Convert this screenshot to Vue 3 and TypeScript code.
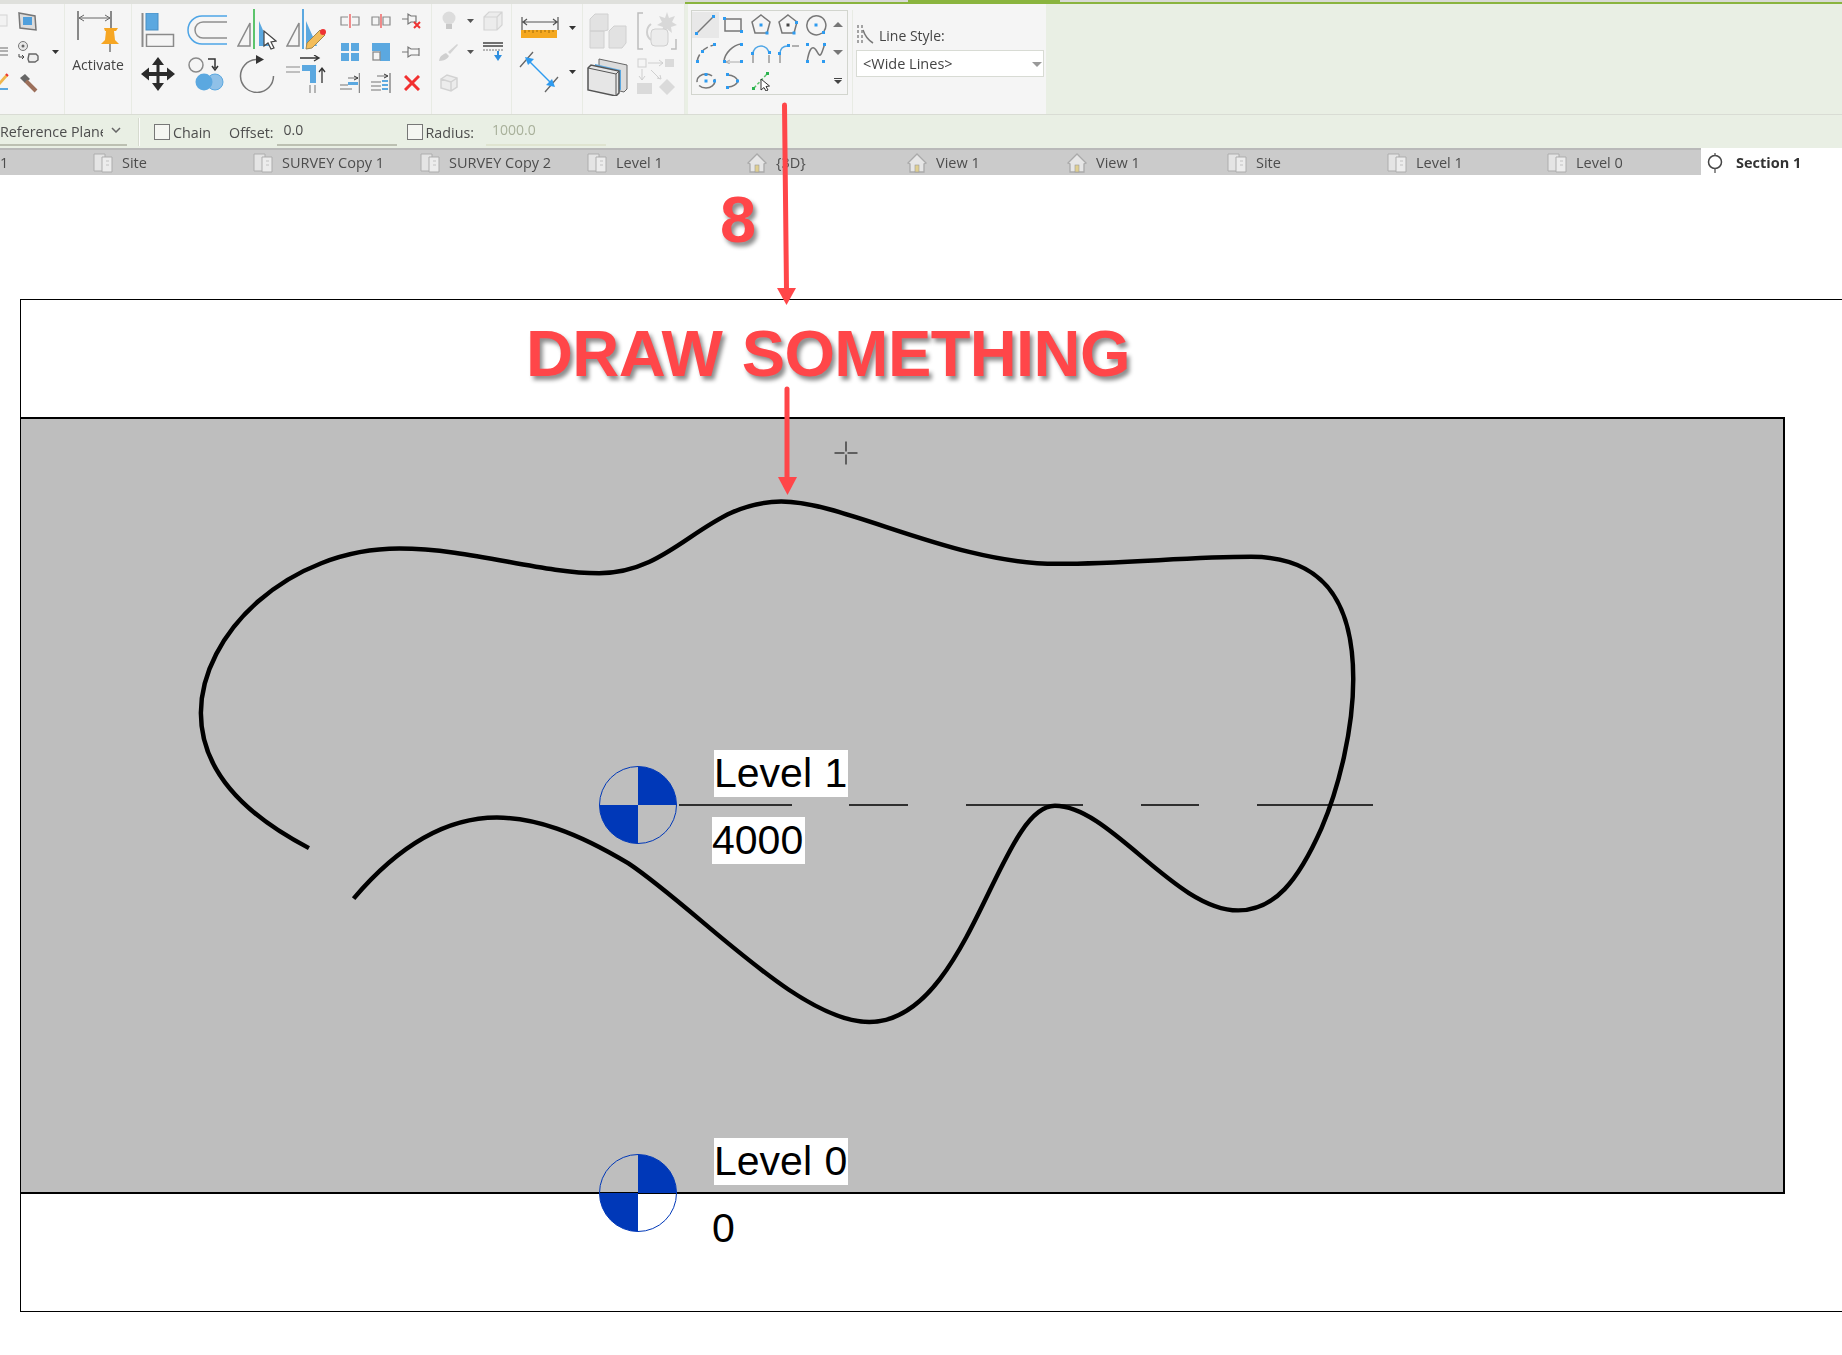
<template>
  <div class="page">
    <div class="top-strip">
      <div class="strip-grey"></div>
      <div class="strip-tab"></div>
      <div class="strip-green"></div>
      <div class="strip-tab strip-rest"></div>
    </div>

    <div class="ribbon">
      <!-- clipped panel on the left edge -->
      <div class="panel panel-a">
        <svg class="ico" width="10" height="18" viewBox="0 0 10 18"><rect x="-4" y="3" width="11" height="11" fill="#f2f2f2" stroke="#d4d4d4" /></svg>
        <svg class="ico" width="20" height="20" viewBox="0 0 20 20"><path d="M1 2 17 5 18 19 2 17Z" fill="#dcdcdc" stroke="#777" stroke-width="1.5" /><rect x="5" y="6" width="9" height="8" fill="#4f9fdc" /></svg>
        <span></span>
        <svg class="ico" width="10" height="14" viewBox="0 0 10 14"><path d="M-2 3H8M-2 6H8M-2 10H8" stroke="#999" stroke-width="1.5" /></svg>
        <svg class="ico" width="22" height="22" viewBox="0 0 22 22"><circle cx="6" cy="5" r="4.5" fill="#e8e8e8" stroke="#777" /><circle cx="6" cy="5" r="1.5" fill="#666" /><path d="M2 13v3h5M5 14l2 2-2 2" fill="none" stroke="#444" /><path d="M12 13h7l2 2v4l-3 2h-6l-1-3Z" fill="#eee" stroke="#666" stroke-width="1.4" /></svg>
        <svg class="ico caret-sm" width="7" height="4" viewBox="0 0 7 4"><path d="M0 0h7L3.500 4Z" fill="#333" /></svg>
        <svg class="ico" width="10" height="20" viewBox="0 0 10 20"><path d="M-2 10 6 1l2 2-8 9Z" fill="#f0b64c" /><path d="M6 1l2 2" stroke="#ee3333" stroke-width="2" /><path d="M-2 16H8" stroke="#5ba8e0" stroke-width="2" /></svg>
        <svg class="ico" width="20" height="20" viewBox="0 0 20 20"><path d="M2 5 7 1l5 5-5 4Z" fill="#666" /><path d="M8 8l10 10" stroke="#9c6f5a" stroke-width="4" /></svg>
        <span></span>
      </div>

      <div class="panel panel-b">
        <svg class="ico" width="42" height="42" viewBox="0 0 42 42">
          <path d="M1 1v29M34 1v29" stroke="#666" stroke-width="1.5" />
          <path d="M2 8h31M7 5 2 8l5 3M28 5l5 3-5 3" fill="none" stroke="#666" />
          <path d="M27 18h14l-2 3h-2l1 9 4 4H24l4-4 1-9h-1Z" fill="#f6a623" />
          <path d="M33 34v8" stroke="#777" stroke-width="1.5" />
        </svg>
        <span class="ribbon-label">Activate</span>
      </div>

      <div class="panel panel-c">
        <div class="tools-large">
          <svg class="ico" width="34" height="34" viewBox="0 0 34 34"><path d="M1.500 0v34" stroke="#8a8a8a" stroke-width="2" /><rect x="5" y="0" width="12" height="17" fill="#5ba8e0" stroke="#4a8fc4" /><rect x="5.500" y="21.500" width="27" height="12" fill="none" stroke="#8a8a8a" stroke-width="1.500" /></svg>
          <svg class="ico" width="40" height="30" viewBox="0 0 40 30"><path d="M40 1H15a14 14 0 0 0 0 28h25" fill="none" stroke="#4ea5e6" stroke-width="1.500" /><path d="M40 7H16a8 8 0 0 0 0 16h24" fill="none" stroke="#8f8f8f" stroke-width="1.500" /></svg>
          <svg class="ico" width="40" height="42" viewBox="0 0 40 42"><path d="M13 14v23H1Z" fill="none" stroke="#8a8a8a" stroke-width="1.500" /><path d="M17 0v40" stroke="#5cc46c" stroke-width="2" /><path d="M22 12v25h11Z" fill="#5ba8e0" /><path d="M27 22v15l4-3 3 6 3-1-3-6 5-1Z" fill="#fff" stroke="#444" stroke-width="1.200" /></svg>
          <svg class="ico" width="40" height="42" viewBox="0 0 40 42"><path d="M13 14v23H1Z" fill="none" stroke="#8a8a8a" stroke-width="1.500" /><path d="M17 0v40" stroke="#5ba8e0" stroke-width="2" /><path d="M20 12v25h11Z" fill="#5ba8e0" /><path d="M21 34 34 21l5 5-13 13-6 1Z" fill="#f3bd5a" stroke="#a08850" /><circle cx="37" cy="23" r="3" fill="#ee3333" /></svg>
          <svg class="ico" width="34" height="34" viewBox="0 0 34 34"><path d="M17 0l6 8h-4.500v7H26v-4.500l8 6.500-8 6.500V19h-7.500v7H23l-6 8-6-8h4.500v-7H8v4.500L0 17l8-6.500V15h7.500V8H11Z" fill="#2b2b2b" /></svg>
          <svg class="ico" width="38" height="36" viewBox="0 0 38 36"><circle cx="8" cy="9" r="7" fill="none" stroke="#8a8a8a" stroke-width="1.500" /><path d="M20 3h7v9M24 10l3 4 3-4" fill="none" stroke="#333" stroke-width="1.500" /><circle cx="27" cy="26" r="8" fill="#8fc1e8" stroke="#5ba8e0" /><circle cx="16" cy="26" r="8.500" fill="#5ba8e0" /></svg>
          <svg class="ico" width="38" height="38" viewBox="0 0 38 38"><path d="M18 4.500A16.500 16.500 0 1 0 35.500 21" fill="none" stroke="#777" stroke-width="1.500" /><path d="M18 0l8 4.500-8 4.500Z" fill="#333" /></svg>
          <svg class="ico" width="40" height="38" viewBox="0 0 40 38"><path d="M0 12h14M0 17h14M24 30v8M29 30v8" stroke="#8a8a8a" stroke-width="1.200" /><path d="M14 3h18M28 0l5 3-5 3" fill="none" stroke="#333" stroke-width="1.300" /><path d="M16 10h14v18h-6V16h-8Z" fill="#5ba8e0" /><path d="M36 14v14M33 17l3-4 3 4" fill="none" stroke="#333" stroke-width="1.300" /></svg>
        </div>
        <div class="tools-small">
          <svg class="ico" width="20" height="14" viewBox="0 0 20 14"><path d="M8 3H1v8h7M12 3h7v8h-7" fill="none" stroke="#8a8a8a" stroke-width="1.200" /><path d="M10 0v14" stroke="#ee4444" stroke-width="1.200" /></svg>
          <svg class="ico" width="20" height="14" viewBox="0 0 20 14"><path d="M1 3h7v8H1ZM12 3h7v8h-7Z" fill="none" stroke="#8a8a8a" stroke-width="1.200" /><path d="M10 0v14" stroke="#ee4444" stroke-width="1.200" /></svg>
          <svg class="ico" width="20" height="18" viewBox="0 0 20 18"><path d="M0 7h6M6 2v10l3-2h5V4H9Z" fill="none" stroke="#777" stroke-width="1.200" /><path d="M12 10l6 6M18 10l-6 6" stroke="#ee3333" stroke-width="2" /></svg>
          <svg class="ico" width="18" height="18" viewBox="0 0 18 18"><rect width="8" height="8" fill="#5ba8e0" /><rect x="10" width="8" height="8" fill="#5ba8e0" /><rect y="10" width="8" height="8" fill="#5ba8e0" /><rect x="10" y="10" width="8" height="8" fill="#5ba8e0" /></svg>
          <svg class="ico" width="18" height="18" viewBox="0 0 18 18"><path d="M0 0h18v18H8V8H0Z" fill="#5ba8e0" /><rect x="1" y="9" width="7" height="8" fill="none" stroke="#8a8a8a" stroke-width="1.300" /></svg>
          <svg class="ico" width="20" height="14" viewBox="0 0 20 14"><path d="M0 7h6M6 2v10l3-2h8V4H9ZM17 3v8" fill="none" stroke="#777" stroke-width="1.200" /></svg>
          <svg class="ico" width="20" height="20" viewBox="0 0 20 20"><path d="M0 12h8M0 16h12M8 5h10" stroke="#777" stroke-width="1.200" /><path d="M14 3l4 2-4 2" fill="none" stroke="#333" /><path d="M8 9h10v3H8Z" fill="#5ba8e0" /><path d="M19.500 0v20" stroke="#8a8a8a" stroke-width="1.500" /></svg>
          <svg class="ico" width="20" height="20" viewBox="0 0 20 20"><path d="M0 9h10M0 13h10M0 17h10M6 3h10" stroke="#777" stroke-width="1.200" /><path d="M13 1l4 2-4 2" fill="none" stroke="#333" /><path d="M11 7h6v2h-6ZM11 11h6v2h-6ZM11 15h6v2h-6Z" fill="#5ba8e0" /><path d="M19 0v20" stroke="#8a8a8a" stroke-width="1.500" /></svg>
          <svg class="ico" width="16" height="16" viewBox="0 0 16 16"><path d="M1 1l14 14M15 1 1 15" stroke="#f23030" stroke-width="3" /></svg>
        </div>
      </div>

      <div class="panel panel-d">
        <svg class="ico" width="16" height="19" viewBox="0 0 16 19"><circle cx="8" cy="7" r="6.500" fill="#dcdcdc" /><rect x="5" y="13" width="6" height="5" fill="#c8c8c8" /></svg>
        <svg class="ico" width="7" height="4" viewBox="0 0 7 4"><path d="M0 0h7L3.500 4Z" fill="#555" /></svg>
        <svg class="ico" width="20" height="20" viewBox="0 0 20 20"><path d="M1 6l5-5h13v13l-5 5H1ZM1 6h13v13M14 6l5-5" fill="#ececec" stroke="#d4d4d4" stroke-width="1.200" /></svg>
        <svg class="ico" width="20" height="18" viewBox="0 0 20 18"><path d="M0 18c1-6 5-7 7-8l3 3c-1 2-4 5-10 5Z" fill="#cfcfcf" /><path d="M9 9 18 1l1 1-8 9Z" fill="#d4d4d4" /></svg>
        <svg class="ico" width="7" height="4" viewBox="0 0 7 4"><path d="M0 0h7L3.500 4Z" fill="#555" /></svg>
        <svg class="ico" width="20" height="20" viewBox="0 0 20 20"><path d="M0 1h20M0 4h20" stroke="#444" stroke-width="1.300" /><path d="M0 8h20" stroke="#777" stroke-dasharray="2 1" /><path d="M15 9v5" stroke="#2e8fe0" stroke-width="2" /><path d="M11 13h8l-4 6Z" fill="#2e8fe0" /></svg>
        <svg class="ico" width="20" height="18" viewBox="0 0 20 18"><path d="M2 5l6-4 10 3v9l-6 4-10-3ZM2 5l10 3v9M12 8l6-4" fill="#ececec" stroke="#d2d2d2" stroke-width="1.500" /></svg>
        <span></span>
        <span></span>
      </div>

      <div class="panel panel-e">
        <svg class="ico" width="38" height="22" viewBox="0 0 38 22"><path d="M1 0v13M37 0v13M2 5h34M6 2 2 5l4 3M32 2l4 3-4 3" fill="none" stroke="#555" stroke-width="1.200" /><rect y="13" width="36" height="8" fill="#f5a81f" /><path d="M4 13v3M8 13v2M12 13v3M16 13v2M20 13v3M24 13v2M28 13v3M32 13v2" stroke="#a06a08" /></svg>
        <svg class="ico" width="7" height="4" viewBox="0 0 7 4"><path d="M0 0h7L3.500 4Z" fill="#333" /></svg>
        <svg class="ico" width="42" height="42" viewBox="0 0 42 42"><path d="M1 16 14 1M26 41 39 26" stroke="#666" stroke-width="1.300" /><path d="M9 9l24 24" stroke="#2e9bf0" stroke-width="1.500" /><path d="M6 6l9 2-6 6ZM36 36l-9-2 6-6Z" fill="#2e9bf0" /></svg>
        <svg class="ico" width="7" height="4" viewBox="0 0 7 4"><path d="M0 0h7L3.500 4Z" fill="#333" /></svg>
      </div>

      <div class="panel panel-f">
        <svg class="ico" width="38" height="36" viewBox="0 0 38 36"><path d="M1 6l5-5h13v16l-4 1H1ZM20 18l5-5h12v17l-4 5H20ZM1 18h14v17H1Z" fill="#e2e2e2" stroke="#d0d0d0" /></svg>
        <svg class="ico" width="40" height="38" viewBox="0 0 40 38"><path d="M6 1H1v36h5M34 37h5V27" fill="none" stroke="#bdbdbd" stroke-width="1.500" /><path d="M30 0l2 6 6-2-3 6 5 3-6 2 1 6-5-4-5 4 1-6-6-2 5-3-3-6 6 2Z" fill="#d8d8d8" /><path d="M14 12a10 10 0 0 0 0 16" fill="none" stroke="#cfcfcf" stroke-width="2" /><rect x="14" y="17" width="17" height="17" rx="4" fill="#ececec" stroke="#cfcfcf" /></svg>
        <svg class="ico" width="42" height="38" viewBox="0 0 42 38"><path d="M12 1l28 6v24l-3 3-25-6Z" fill="#dcdcdc" stroke="#666" /><path d="M8 6l26 6v20L8 27Z" fill="#5ba8e0" /><path d="M1 10l3-3 28 6v22l-3 3-28-6Z" fill="#e6e6e6" stroke="#555" stroke-width="1.500" /><path d="M29 38V16L1 10M29 16l3-3" fill="none" stroke="#555" /></svg>
        <svg class="ico" width="40" height="38" viewBox="0 0 40 38"><rect x="1" y="1" width="8" height="8" fill="#f5f5f5" stroke="#cfcfcf" /><path d="M11 5h15M22 2l4 3-4 3" fill="none" stroke="#cfcfcf" /><rect x="28" y="1" width="9" height="8" fill="#dadada" /><path d="M5 11v11M2 18l3 4 3-4M14 12l9 9M20 20l4 1-1-4" fill="none" stroke="#cfcfcf" /><rect y="25" width="15" height="11" fill="#dadada" /><path d="M30 21l8 8-8 8-8-8Z" fill="#dadada" /></svg>
      </div>

      <div class="panel-draw">
        <div class="gallery">
          <div class="cell cell-active"><svg class="ico" width="22" height="22" viewBox="0 0 22 22"><path d="M3 19 19 3" stroke="#777" stroke-width="1.500" /><rect x="1" y="18" width="3" height="3" fill="#2e9bf0" /><rect x="18" y="1" width="3" height="3" fill="#2e9bf0" /></svg></div>
          <div class="cell"><svg class="ico" width="22" height="18" viewBox="0 0 22 18"><rect x="3" y="3" width="16" height="12" fill="none" stroke="#777" stroke-width="1.500" /><rect x="1" y="1" width="3" height="3" fill="#2e9bf0" /><rect x="18" y="14" width="3" height="3" fill="#2e9bf0" /></svg></div>
          <div class="cell"><svg class="ico" width="22" height="22" viewBox="0 0 22 22"><path d="M11 1l9 7-3 11H5L2 8Z" fill="none" stroke="#777" stroke-width="1.500" /><rect x="9.500" y="9.500" width="3" height="3" fill="#2e9bf0" /><rect x="15.500" y="17.500" width="3" height="3" fill="#2e9bf0" /></svg></div>
          <div class="cell"><svg class="ico" width="22" height="22" viewBox="0 0 22 22"><path d="M11 1l9 7-3 11H5L2 8Z" fill="none" stroke="#777" stroke-width="1.500" /><rect x="9.500" y="9.500" width="3" height="3" fill="#444" /><rect x="18" y="7" width="3" height="3" fill="#2e9bf0" /><rect x="15.500" y="17.500" width="3" height="3" fill="#2e9bf0" /></svg></div>
          <div class="cell"><svg class="ico" width="22" height="22" viewBox="0 0 22 22"><path d="M17 19a9.500 9.500 0 1 1 2-2" fill="none" stroke="#777" stroke-width="1.500" /><rect x="9.500" y="9.500" width="3" height="3" fill="#2e9bf0" /><rect x="17" y="17" width="3" height="3" fill="#2e9bf0" /></svg></div>
          <div class="cell scroll"><svg class="ico" width="10" height="5" viewBox="0 0 10 5"><path d="M5 0l5 5H0Z" fill="#777" /></svg></div>

          <div class="cell"><svg class="ico" width="22" height="22" viewBox="0 0 22 22"><path d="M2 20C3 11 11 4 20 3" fill="none" stroke="#777" stroke-width="1.500" stroke-dasharray="8 3" /><rect x="1" y="18" width="3" height="3" fill="#2e9bf0" /><rect x="6" y="8" width="3" height="3" fill="#2e9bf0" /><rect x="18" y="1" width="3" height="3" fill="#2e9bf0" /></svg></div>
          <div class="cell"><svg class="ico" width="22" height="22" viewBox="0 0 22 22"><path d="M2 19C3 11 11 3 19 2" fill="none" stroke="#777" stroke-width="1.500" /><path d="M3 20h17M8 18l-4 2 4 2" fill="none" stroke="#aaa" /><rect x="1" y="18" width="3" height="3" fill="#2e9bf0" /><rect x="18" y="1" width="3" height="3" fill="#2e9bf0" /><rect x="18" y="18" width="3" height="3" fill="#2e9bf0" /></svg></div>
          <div class="cell"><svg class="ico" width="22" height="22" viewBox="0 0 22 22"><path d="M3 12a8 8 0 0 1 16 0" fill="none" stroke="#4ea5e6" stroke-width="1.500" /><path d="M3 13v8M19 13v8" stroke="#999" stroke-width="1.500" /><rect x="1" y="10" width="3" height="3" fill="#2e9bf0" /><rect x="18" y="9" width="3" height="3" fill="#2e9bf0" /></svg></div>
          <div class="cell"><svg class="ico" width="22" height="22" viewBox="0 0 22 22"><path d="M3 12c0-5 3-8 8-8" fill="none" stroke="#4ea5e6" stroke-width="1.500" /><path d="M3 13v8M15 4h7" stroke="#999" stroke-width="1.500" /><rect x="1" y="10" width="3" height="3" fill="#2e9bf0" /><rect x="10" y="2" width="3" height="3" fill="#2e9bf0" /></svg></div>
          <div class="cell"><svg class="ico" width="22" height="22" viewBox="0 0 22 22"><path d="M2 20C4 8 7 2 11 8s4 10 9-7" fill="none" stroke="#777" stroke-width="1.500" /><rect x="1" y="18" width="3" height="3" fill="#2e9bf0" /><rect x="1" y="1" width="3" height="3" fill="#2e9bf0" /><rect x="17" y="18" width="3" height="3" fill="#2e9bf0" /><rect x="18" y="1" width="3" height="3" fill="#2e9bf0" /></svg></div>
          <div class="cell scroll"><svg class="ico" width="10" height="5" viewBox="0 0 10 5"><path d="M0 0h10L5 5Z" fill="#777" /></svg></div>

          <div class="cell"><svg class="ico" width="20" height="16" viewBox="0 0 20 16"><ellipse cx="10" cy="8" rx="9" ry="7" fill="none" stroke="#777" stroke-width="1.500" stroke-dasharray="20 4" /><rect x="8.500" y="6.500" width="3" height="3" fill="#2e9bf0" /><rect x="17" y="6.500" width="3" height="3" fill="#2e9bf0" /><rect x="8.500" y="0" width="3" height="3" fill="#2e9bf0" /></svg></div>
          <div class="cell"><svg class="ico" width="14" height="16" viewBox="0 0 14 16"><path d="M2 2c5 0 9 3 10 6-1 3-5 6-10 6" fill="none" stroke="#777" stroke-width="1.500" /><rect x="0" y="0" width="3" height="3" fill="#2e9bf0" /><rect x="10" y="6.500" width="3" height="3" fill="#2e9bf0" /><rect x="0" y="13" width="3" height="3" fill="#2e9bf0" /></svg></div>
          <div class="cell"><svg class="ico" width="18" height="20" viewBox="0 0 18 20"><path d="M2 17 15 3" stroke="#5cc46c" stroke-width="1.500" stroke-dasharray="3 2" /><rect x="0" y="16" width="3" height="3" fill="#2bb350" /><rect x="14" y="1" width="3" height="3" fill="#2bb350" /><path d="M9 8v11l3-2.500 2 3.500 2-1-2-3.500 3.500-.5Z" fill="#fff" stroke="#333" /></svg></div>
          <div class="cell"></div>
          <div class="cell"></div>
          <div class="cell scroll"><svg class="ico" width="8" height="6" viewBox="0 0 8 6"><path d="M0 0h8v1H0Z M0 2h8L4 6Z" fill="#444" /></svg></div>
        </div>
        <div class="line-style">
          <div class="line-style-head">
            <svg class="ico" width="18" height="20" viewBox="0 0 18 20"><path d="M2 0v18M6 0v18" stroke="#888" stroke-width="1.500" stroke-dasharray="3 2" /><path d="M7 5c2 6 5 10 10 13" fill="none" stroke="#777" stroke-width="1.500" /></svg>
            <span>Line Style:</span>
          </div>
          <div class="select">
            <span>&lt;Wide Lines&gt;</span>
            <span class="select-caret"></span>
          </div>
        </div>
      </div>
    </div>

    <div class="options">
      <div class="family-field">
        <span class="family">Reference Plane</span>
        <svg class="chevron" width="10" height="6" viewBox="0 0 10 6"><path d="M1 1l4 4 4-4" fill="none" stroke="#666" stroke-width="1.500" /></svg>
      </div>
      <span class="opt-sep"></span>
      <label class="check chain"><span class="box"></span>Chain</label>
      <span class="offset-label">Offset:</span>
      <span class="field">0.0</span>
      <label class="check radius"><span class="box"></span>Radius:</label>
      <span class="field field-off">1000.0</span>
    </div>

    <div class="tabs">
      <div class="tab tab-first">1</div>
      <div v-for="t in tabs" :key="t.label + t.width" class="tab" :style="{ width: t.width + 'px' }">
        <svg v-if="t.kind === 'plan'" class="tab-ico" width="20" height="20" viewBox="0 0 20 20">
          <path d="M1 1h11v17H1Z" fill="#e4e4e4" stroke="#adadad" />
          <path d="M9 4h10v15H9Z" fill="#ececec" stroke="#adadad" />
          <path d="M13 8h3M13 12h3" stroke="#cfcfcf" stroke-width="1.500" />
        </svg>
        <svg v-else class="tab-ico" width="20" height="20" viewBox="0 0 20 20">
          <path d="M1 10 10 1l9 9-2 1v8H3v-8Z" fill="#e6e6e6" stroke="#aaa" stroke-width="1.300" />
          <rect x="8" y="12" width="4" height="7" fill="#e0cf90" stroke="#999" stroke-width="0.600" />
        </svg>
        <span>{{ t.label }}</span>
      </div>
      <div class="tab tab-active">
        <svg class="tab-ico" width="18" height="20" viewBox="0 0 18 20">
          <circle cx="9" cy="9" r="6.500" fill="#fff" stroke="#444" stroke-width="1.500" />
          <path d="M9 0v3M9 15v5" stroke="#555" stroke-width="1.300" />
        </svg>
        <span>Section 1</span>
      </div>
    </div>

    <div class="canvas">
      <div class="sheet">
        <div class="wall"></div>
      </div>

      <svg class="drawing" width="1842" height="1180" viewBox="0 175 1842 1180">
        <!-- level 1 -->
        <path d="M679 805H792M849 805H908M966 805H1083M1141 805H1199M1257 805H1373" stroke="#000" stroke-width="1.400" />
        <circle cx="638" cy="805" r="38.500" fill="none" stroke="#0038b8" stroke-width="1" />
        <path d="M638 805V766.500A38.500 38.500 0 0 1 676.500 805ZM638 805V843.500A38.500 38.500 0 0 1 599.500 805Z" fill="#0038b8" />
        <!-- level 0 -->
        <circle cx="638" cy="1193" r="38.500" fill="none" stroke="#0038b8" stroke-width="1" />
        <path d="M638 1193V1154.500A38.500 38.500 0 0 1 676.500 1193ZM638 1193V1231.500A38.500 38.500 0 0 1 599.500 1193Z" fill="#0038b8" />
        <!-- freehand spline, traced in 1568-wide coordinates -->
        <path class="spline" transform="scale(1.1747)" d="M263 722C215 697 171 660 171 607C171 540 245 467 340 467C400 467 460 488 510 488C575 488 600 427 665 427C720 427 810 480 900 480C960 480 1010 474 1065 474C1125 474 1152 510 1152 578C1152 620 1140 670 1125 705C1105 750 1085 775 1054 775C1000 775 945 686 898 686C850 686 825 870 740 870C680 870 595 775 535 735C490 708 455 696 423 696C375 696 335 725 301 765" />
        <!-- crosshair cursor -->
        <path d="M834.500 453H844.500M847.500 453H857.500M846 441.500V451.500M846 454.500V464.500" stroke="#000" stroke-width="1" />
      </svg>

      <div class="level-text level-box lvl1-name">Level 1</div>
      <div class="level-text level-box lvl1-height">4000</div>
      <div class="level-text level-box lvl0-name">Level 0</div>
      <div class="level-text lvl0-height">0</div>
    </div>

    <!-- red annotations pasted over the screenshot -->
    <svg class="arrows" width="1842" height="1355" viewBox="0 0 1842 1355">
      <path d="M784.500 105 786.500 290" stroke="#ff4649" stroke-width="5" stroke-linecap="round" />
      <path d="M777 288H796L786.500 305Z" fill="#ff4649" />
      <path d="M787 389V478" stroke="#ff4649" stroke-width="5" stroke-linecap="round" />
      <path d="M778 477H797L787.500 495Z" fill="#ff4649" />
    </svg>
    <div class="callout callout-num">8</div>
    <div class="callout callout-title">DRAW SOMETHING</div>
  </div>
</template>

<script setup lang="ts">
interface ViewTab {
  label: string;
  kind: 'plan' | 'home';
  width: number;
}

const tabs: ViewTab[] = [
  { label: 'Site', kind: 'plan', width: 160 },
  { label: 'SURVEY Copy 1', kind: 'plan', width: 167 },
  { label: 'SURVEY Copy 2', kind: 'plan', width: 167 },
  { label: 'Level 1', kind: 'plan', width: 160 },
  { label: '{3D}', kind: 'home', width: 160 },
  { label: 'View 1', kind: 'home', width: 160 },
  { label: 'View 1', kind: 'home', width: 160 },
  { label: 'Site', kind: 'plan', width: 160 },
  { label: 'Level 1', kind: 'plan', width: 160 },
  { label: 'Level 0', kind: 'plan', width: 160 },
];
</script>

<style>
html,
body {
  margin: 0;
  background: #fff;
}
</style>

<style scoped>
.page {
  position: relative;
  width: 1842px;
  height: 1355px;
  overflow: hidden;
  display: flex;
  flex-direction: column;
  background: #fff;
  font-family: "Open Sans", "Liberation Sans", sans-serif;
  color: #444;
}

.ico {
  display: block;
  place-self: center;
}

/* title strip */
.top-strip {
  display: flex;
  height: 4px;
  flex: none;
}
.strip-grey {
  width: 685px;
  background: #dfe0dc;
}
.strip-tab {
  width: 223px;
  background: linear-gradient(#d9dad5 50%, #8ab43e 50%);
}
.strip-green {
  width: 152px;
  background: #8ab43e;
}
.strip-rest {
  flex: 1;
}

/* ribbon */
.ribbon {
  display: flex;
  height: 110px;
  flex: none;
  background: #e9efe4;
  border-bottom: 1px solid #d9dcd4;
  filter: blur(0.3px);
}
.panel {
  box-sizing: border-box;
  flex: none;
  height: 100%;
  background: #f5f5f5;
  border-right: 1px solid #e8ebe4;
}
.panel-a {
  width: 65px;
  display: grid;
  grid-template-columns: 10px 36px 19px;
  grid-template-rows: repeat(3, 31px);
  padding-top: 1px;
}
.panel-b {
  width: 67px;
  display: flex;
  flex-direction: column;
  align-items: center;
  padding-top: 6px;
}
.ribbon-label {
  margin-top: 3px;
  font-size: 14px;
  line-height: 20px;
  color: #444;
}
.panel-c {
  width: 300px;
  display: flex;
}
.tools-large {
  width: 201px;
  flex: none;
  display: grid;
  grid-template-columns: repeat(4, 49.5px);
  grid-template-rows: 44px 44px;
  align-content: start;
  padding-top: 4px;
  box-sizing: border-box;
  margin-left: 1px;
}
.tools-small {
  display: grid;
  grid-template-columns: repeat(3, 31px);
  grid-template-rows: repeat(3, 31px);
  align-content: start;
  padding-top: 1px;
}
.panel-d {
  width: 80px;
  display: grid;
  grid-template-columns: 34px 8px 38px;
  grid-template-rows: repeat(3, 31px);
  align-content: start;
  padding-top: 1px;
}
.panel-e {
  width: 71px;
  display: grid;
  grid-template-columns: 55px 10px;
  grid-template-rows: 36px 52px;
  align-content: start;
  padding-top: 6px;
}
.panel-f {
  width: 102px;
  display: grid;
  grid-template-columns: 50px 48px;
  grid-template-rows: 46px 46px;
  align-content: start;
  padding-top: 4px;
}
.panel-draw {
  flex: none;
  box-sizing: border-box;
  width: 358px;
  height: 100%;
  margin-left: 3px;
  padding: 6px 0 0 3px;
  display: flex;
  background: #f5f5f5;
}
.gallery {
  box-sizing: border-box;
  width: 157px;
  height: 85px;
  border: 1px solid #d2d5ce;
  display: grid;
  grid-template-columns: repeat(5, 27.500px) 1fr;
  grid-template-rows: 27px 29px 27px;
}
.cell {
  display: flex;
  align-items: center;
  justify-content: center;
}
.cell-active {
  background: #e8e8e8;
  margin: 1px 1px 0 0;
}
.scroll {
  padding-right: 1px;
}
.line-style {
  box-sizing: border-box;
  flex: 1;
  margin-left: 4px;
  border-left: 1px solid #e8ebe4;
  padding: 14px 0 0 3px;
}
.line-style-head {
  display: flex;
  align-items: center;
  gap: 5px;
  height: 22px;
  font-size: 14px;
  color: #444;
}
.select {
  box-sizing: border-box;
  position: relative;
  width: 188px;
  height: 27px;
  margin-top: 4px;
  padding-left: 6px;
  border: 1px solid #d8dbd4;
  background: #fff;
  font-size: 14.500px;
  line-height: 25px;
  color: #444;
}
.select-caret {
  position: absolute;
  right: 1px;
  top: 11px;
  border-left: 5px solid transparent;
  border-right: 5px solid transparent;
  border-top: 5px solid #999;
}

/* options bar */
.options {
  display: flex;
  align-items: center;
  height: 33px;
  flex: none;
  padding-top: 1px;
  box-sizing: border-box;
  background: #e9efe4;
  font-size: 14.300px;
  color: #4d4d4d;
  filter: blur(0.3px);
}
.family-field {
  box-sizing: border-box;
  display: flex;
  align-items: center;
  align-self: flex-end;
  width: 127px;
  height: 30px;
  margin-bottom: 2px;
  padding-top: 3px;
  border-bottom: 2px solid #bcc0b2;
}
.family {
  width: 103px;
  white-space: nowrap;
  overflow: hidden;
}
.chevron {
  margin-left: 8px;
  margin-top: -4px;
}
.opt-sep {
  width: 1px;
  height: 28px;
  margin-left: 12px;
  background: #fbfcfa;
  box-shadow: -1px 0 0 #d6dacf;
}
.check {
  display: flex;
  align-items: center;
  gap: 3px;
}
.box {
  box-sizing: border-box;
  width: 16px;
  height: 16px;
  background: #f5f6f2;
  border: 1px solid #777;
}
.chain {
  margin-left: 14px;
}
.offset-label {
  margin-left: 18px;
}
.field {
  box-sizing: border-box;
  align-self: flex-end;
  width: 120px;
  height: 30px;
  margin-left: 3px;
  margin-bottom: 2px;
  padding-left: 7px;
  border-bottom: 2px solid #bcc0b2;
  font-size: 14px;
  line-height: 28px;
  color: #4d4d4d;
}
.radius {
  margin-left: 10px;
}
.field-off {
  margin-left: 12px;
  padding-left: 6px;
  border-bottom-color: #dfe4d0;
  color: #a8b09a;
}

/* view tabs */
.tabs {
  display: flex;
  height: 27px;
  flex: none;
  box-sizing: border-box;
  background: #cbcbcb;
  border-top: 2px solid #b9b9b9;
  font-size: 14.500px;
  color: #4d4d4d;
  filter: blur(0.3px);
}
.tab {
  box-sizing: border-box;
  display: flex;
  align-items: center;
  flex: none;
  gap: 9px;
  padding-left: 6px;
  white-space: nowrap;
}
.tab-first {
  width: 87px;
  padding-left: 0;
}
.tab-active {
  flex: 1;
  padding: 2px 0 0 5px;
  margin-top: -2px;
  gap: 12px;
  background: #fff;
  font-weight: 700;
  color: #333;
}
.tab-ico {
  flex: none;
}

/* drawing area */
.canvas {
  position: relative;
  flex: 1;
}
.sheet {
  position: absolute;
  left: 20px;
  right: 0;
  top: 124px;
  height: 1013px;
  box-sizing: border-box;
  border: 1px solid #000;
  border-right: none;
}
.wall {
  position: absolute;
  left: -1px;
  top: 117px;
  width: 1765px;
  height: 777px;
  box-sizing: border-box;
  background: #bebebe;
  border: 2px solid #000;
  border-left-width: 1px;
}
.drawing {
  position: absolute;
  left: 0;
  top: 0;
}
.spline {
  fill: none;
  stroke: #000;
  stroke-width: 3.800;
  stroke-linecap: butt;
}
.level-text {
  position: absolute;
  height: 47px;
  line-height: 47px;
  font-family: "Liberation Sans", sans-serif;
  font-size: 41px;
  word-spacing: 1px;
  color: #000;
  white-space: nowrap;
}
.level-box {
  background: #fff;
}
.lvl1-name {
  left: 714px;
  top: 575px;
  width: 134px;
}
.lvl1-height {
  left: 712px;
  top: 642px;
  width: 93px;
}
.lvl0-name {
  left: 714px;
  top: 963px;
  width: 134px;
}
.lvl0-height {
  left: 712px;
  top: 1030px;
}

/* annotations */
.arrows {
  position: absolute;
  left: 0;
  top: 0;
  pointer-events: none;
}
.callout {
  position: absolute;
  font-family: "Liberation Sans", sans-serif;
  font-weight: 700;
  font-size: 65px;
  line-height: 75px;
  color: #ff4649;
  text-shadow: 3px 4px 4px rgba(0, 0, 0, 0.45);
  white-space: nowrap;
}
.callout-num {
  left: 720px;
  top: 182px;
}
.callout-title {
  left: 526px;
  top: 316px;
  letter-spacing: -0.600px;
  word-spacing: 2px;
}
</style>
